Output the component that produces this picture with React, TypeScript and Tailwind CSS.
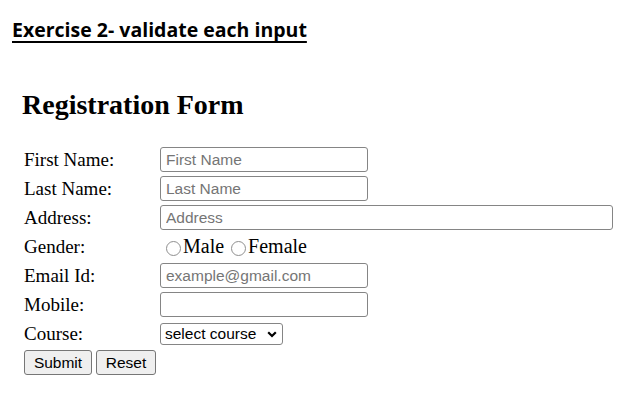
export default function App() {
  const fields = [
    { label: 'First Name:', placeholder: 'First Name', wide: false },
    { label: 'Last Name:', placeholder: 'Last Name', wide: false },
    { label: 'Address:', placeholder: 'Address', wide: true },
  ];

  const inputCls =
    "h-[25px] rounded-[3px] border border-[#858585] bg-white px-[5px] font-['Liberation_Sans',Arial,sans-serif] text-[15.5px] text-black outline-none placeholder:text-[#757575]";

  const radioCls =
    'h-[15px] w-[15px] shrink-0 appearance-none rounded-full border border-[#8f8f8f] bg-white';

  return (
    <div className="h-[402px] w-[636px] overflow-hidden bg-white text-black">
      <div className="pl-[12px] pt-[19px]">
        <span className="font-['Open_Sans',sans-serif] text-[19.5px] leading-[22px] font-bold underline decoration-[2px] underline-offset-[4px] [text-decoration-skip-ink:none]">
          Exercise 2- validate each input
        </span>
      </div>

      <h1 className="mt-[45px] pl-[22px] font-['Liberation_Serif','Times_New_Roman',serif] text-[28px] leading-[34px] font-bold">
        Registration Form
      </h1>

      <form className="mt-[25px] flex flex-col gap-[4px] pl-[24px] font-['Liberation_Serif','Times_New_Roman',serif] text-[19px]">
        {fields.map((f) => (
          <div key={f.label} className="flex h-[25px] items-center">
            <label className="w-[136px] leading-[25px]">{f.label}</label>
            <input
              type="text"
              placeholder={f.placeholder}
              className={`${inputCls} ${f.wide ? 'w-[453px]' : 'w-[208px]'}`}
            />
          </div>
        ))}

        <div className="flex h-[25px] items-center">
          <span className="w-[136px] leading-[25px]">Gender:</span>
          <label className="ml-[6px] flex items-center">
            <input type="radio" name="gender" className={`${radioCls} mt-[3px]`} />
            <span className="ml-[2px] text-[20px] leading-[25px]">Male</span>
          </label>
          <label className="ml-[7px] flex items-center">
            <input type="radio" name="gender" className={`${radioCls} mt-[3px]`} />
            <span className="ml-[2px] text-[20px] leading-[25px]">Female</span>
          </label>
        </div>

        <div className="flex h-[25px] items-center">
          <label className="w-[136px] leading-[25px]">Email Id:</label>
          <input type="email" placeholder="example@gmail.com" className={`${inputCls} w-[208px]`} />
        </div>

        <div className="flex h-[25px] items-center">
          <label className="w-[136px] leading-[25px]">Mobile:</label>
          <input type="text" className={`${inputCls} w-[208px]`} />
        </div>

        <div className="flex h-[25px] items-center">
          <label className="w-[136px] leading-[25px]">Course:</label>
          <div className="relative h-[22px] w-[123px]">
            <select className="block h-[22px] w-[123px] appearance-none rounded-[3px] border border-[#858585] bg-white pl-[4px] font-['Liberation_Sans',Arial,sans-serif] text-[15.5px] leading-[20px] text-black outline-none">
              <option>select course</option>
            </select>
            <svg
              viewBox="0 0 10 7"
              className="pointer-events-none absolute right-[6px] top-[8px] h-[7px] w-[10px]"
            >
              <path d="M1.2 1.2 L5 5 L8.8 1.2" fill="none" stroke="#000" strokeWidth="2.2" />
            </svg>
          </div>
        </div>

        <div className="flex h-[25px] items-center gap-[4px] font-['Liberation_Sans',Arial,sans-serif] text-[15.5px]">
          <button
            type="button"
            className="h-[25px] w-[68px] rounded-[3px] border border-[#767676] bg-[#efefef] text-black"
          >
            Submit
          </button>
          <button
            type="button"
            className="h-[25px] w-[60px] rounded-[3px] border border-[#767676] bg-[#efefef] text-black"
          >
            Reset
          </button>
        </div>
      </form>
    </div>
  );
}
